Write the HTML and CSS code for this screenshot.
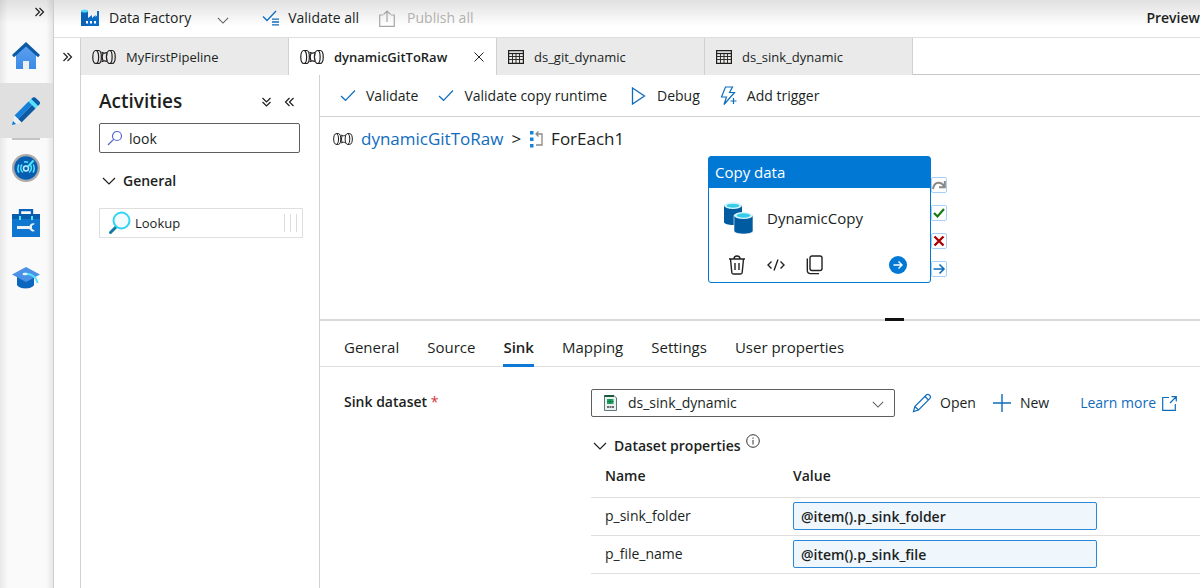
FILE: index.html
```html
<!DOCTYPE html>
<html lang="en">
<head>
<meta charset="utf-8">
<title>Data Factory</title>
<link rel="stylesheet" href="styles.css">
</head>
<body>
<svg class="defs" aria-hidden="true">
  <symbol id="pipeline" viewBox="0 0 24 16">
    <g fill="none" stroke="currentColor" stroke-width="1.2">
      <path d="M4 1.500c-4.300 0-4.300 13 0 13M4 1.500h2.500c3.800 0 3.800 13 0 13H4M4 1.500c3.500 0 3.500 13 0 13"/>
      <path d="M9.500 3.200c2 1.200 4 1.200 6 0M9.500 12.800c2-1.200 4-1.200 6 0M11 3.800c-1 2.500-1 6 0 8.400"/>
      <path d="M20 1.500c4.300 0 4.300 13 0 13M20 1.500h-2.500c-.8 0-1.400.6-1.900 1.600M20 14.500h-2.500c-.8 0-1.400-.6-1.900-1.600M17.500 1.500c3.500 0 3.500 13 0 13M15.300 3.500c-1 2.500-1 6.500 0 9"/>
    </g>
  </symbol>
  <symbol id="table" viewBox="0 0 16 14">
    <path d="M.600.600h14.800v12.800H.6z" fill="none" stroke="currentColor" stroke-width="1.200"/>
    <path d="M1 3.500h14" stroke="currentColor" stroke-width="1.200"/>
    <path d="M1 6.500h14M1 9.500h14M4.500 3.500v10M8 3.500v10M11.500 3.500v10" stroke="currentColor" stroke-width=".9"/>
  </symbol>
  <symbol id="check" viewBox="0 0 16 14"><path d="M1 7l4.500 4.300L15 1.500" fill="none" stroke="currentColor" stroke-width="1.200"/></symbol>
  <symbol id="chev" viewBox="0 0 14 8"><path d="M1 1l6 6 6-6" fill="none" stroke="currentColor" stroke-width="1.200"/></symbol>
  <symbol id="double" viewBox="0 0 10 10"><path d="M1 1l4 4-4 4M5 1l4 4-4 4" fill="none" stroke="currentColor" stroke-width="1.200"/></symbol>
</svg>

<nav class="rail" aria-label="Main">
  <button class="rail-expand" aria-label="Expand navigation"><svg width="11" height="10"><use href="#double"/></svg></button>
  <button class="rail-item" aria-label="Home">
    <svg width="28" height="28" viewBox="0 0 28 28"><defs><linearGradient id="blue" x1="0" y1="0" x2="0" y2="1"><stop offset="0" stop-color="#5ea0ef"/><stop offset="1" stop-color="#3b8be6"/></linearGradient></defs><path d="M4 12L14 3l10 9v15h-7v-8h-6v8H4z" fill="url(#blue)"/><path d="M11 19h6v8h-6z" fill="#eee"/><path d="M0 13L14 0l14 13-2 2.300L14 4.500 2 15.300z" fill="#0c59a4"/></svg>
  </button>
  <button class="rail-item selected" aria-label="Author">
    <svg width="28" height="28" viewBox="0 0 28 28"><path d="M19 2l2-1.400c1-.7 2-.5 2.800.3l3.600 3.600c.8.800.8 2 .2 2.800L26 9z" fill="#0a5ca8"/><path d="M16.500 4.500L19 2l7 7-2.500 2.500z" fill="#50e6ff"/><path d="M2.500 18.500l14-14 3.500 3.500L6 22z" fill="#1480dc"/><path d="M6 22L20 8l3.500 3.500-14 14z" fill="#0c59a4"/><path d="M2.500 18.500L0 28l9.500-2.500z" fill="#eef0f2"/><path d="M1 24l-1 4 4-1z" fill="#0078d4"/></svg>
  </button>
  <hr class="rail-rule">
  <button class="rail-item" aria-label="Monitor">
    <svg width="28" height="28" viewBox="0 0 28 28"><circle cx="14" cy="14" r="14" fill="#aaa"/><circle cx="14" cy="14" r="11.700" fill="#075eb0"/><g fill="none" stroke="#50e6ff" stroke-width="1.500"><circle cx="14" cy="14.500" r="2.500" stroke="#b9f0ff"/><path d="M16 12.500L21.500 6.500" stroke-width="2"/><path d="M11 18.500a5.500 5.500 0 0 1-1-8M16 8.500a6 6 0 0 0-4-.5M18.500 11a5.500 5.500 0 0 1-1.500 7.500M7 10.500a8 8 0 0 0 0 8M21.200 10.500a8 8 0 0 1-.2 8"/></g></svg>
  </button>
  <button class="rail-item" aria-label="Manage">
    <svg width="28" height="28" viewBox="0 0 28 28"><path d="M8 6V1h12v5" fill="none" stroke="#0a62b8" stroke-width="2.400"/><path d="M0 5h28v23H0z" fill="#0f76d0"/><path d="M0 5h28v5H0z" fill="#075cac"/><path d="M7 7h2v4H7zM19 7h2v4h-2z" fill="#50e6ff"/><path d="M5 17h12.500a4 4 0 0 1 5.500-2.300l-3 2v3l3 2.300A4 4 0 0 1 17.500 20H5z" fill="#e9f1f8"/></svg>
  </button>
  <button class="rail-item" aria-label="Learning center">
    <svg width="28" height="24" viewBox="0 0 28 24"><path d="M5 9h17v10c-2 4.500-15 4.500-17 0z" fill="#0b66bd"/><path d="M0 8.500L14 1l14 7.500L14 16z" fill="#4b92e6"/><path d="M12 8c6-1 12 2 13.500 9" fill="none" stroke="#50e6ff" stroke-width="2"/><ellipse cx="13" cy="8" rx="2.500" ry="1.200" fill="#e5f5ff"/></svg>
  </button>
</nav>

<div class="app">
  <header class="topbar">
    <button class="cmd brand"><svg width="18" height="18" viewBox="0 0 18 18"><path d="M0 2h7v15H0z" fill="#0b62b5"/><path d="M7 17V9l4-3v3l3.500-3v2L16 6.500V2h2v15z" fill="#0a6cc6"/><ellipse cx="3.500" cy="2" rx="3.500" ry="1.500" fill="#50d8f5"/><path d="M5 12h2v2.500H5zM9 12h2v2.500H9zM13 12h2v2.500h-2z" fill="#fff"/></svg>Data Factory<svg class="drop" width="12" height="7"><use href="#chev"/></svg></button>
    <button class="cmd"><svg width="18" height="16" viewBox="0 0 18 16"><g fill="none" stroke="#0f6cbd" stroke-width="1.300"><path d="M1 6.500L5 10.500 14 1M10 9.200h7M10 12h7M10 14.800h7"/></g></svg>Validate all</button>
    <button class="cmd" disabled><svg width="16" height="17" viewBox="0 0 16 17"><path d="M4 5H.7v11.300h14.600V5H12M8 12V1M4.500 4.500L8 1l3.500 3.500" fill="none" stroke="#a8a6a4" stroke-width="1.200"/></svg>Publish all</button>
    <span class="preview">Preview</span>
  </header>

  <div class="workspace">
    <div class="tree-toggle"><button aria-label="Expand resources"><svg width="11" height="10"><use href="#double"/></svg></button></div>
    <div class="stage">
      <div class="doc-tabs" role="tablist" aria-label="Open documents">
        <button class="doc-tab" role="tab"><svg width="24" height="16"><use href="#pipeline"/></svg>MyFirstPipeline</button>
        <div class="doc-tab active"><button class="tab-name" role="tab" aria-selected="true"><svg width="24" height="16"><use href="#pipeline"/></svg>dynamicGitToRaw</button><button class="close" aria-label="Close"><svg width="10" height="10" viewBox="0 0 10 10"><path d="M.5.500l9 9M9.500.500l-9 9" stroke="#222"/></svg></button></div>
        <button class="doc-tab" role="tab"><svg width="16" height="14"><use href="#table"/></svg>ds_git_dynamic</button>
        <button class="doc-tab" role="tab"><svg width="16" height="14"><use href="#table"/></svg>ds_sink_dynamic</button>
      </div>

      <div class="panes">
        <aside class="activities">
          <div class="act-head">
            <h2>Activities</h2>
            <button aria-label="Expand all"><svg class="down" width="11" height="10"><use href="#double"/></svg></button>
            <button aria-label="Collapse panel"><svg class="left" width="11" height="10"><use href="#double"/></svg></button>
          </div>
          <label class="search"><svg width="16" height="16" viewBox="0 0 16 16"><g fill="none" stroke="#5167d8" stroke-width="1.200"><circle cx="10" cy="6" r="4.500"/><path d="M6.800 9.200L1 15"/></g></svg><input type="text" value="look" aria-label="Search activities"></label>
          <button class="group"><svg width="14" height="8"><use href="#chev"/></svg>General</button>
          <button class="activity"><svg width="24" height="24" viewBox="0 0 24 24"><path d="M8 16L2.500 21.500" stroke="#0f7ba3" stroke-width="3" stroke-linecap="round"/><circle cx="13.500" cy="9.500" r="8" fill="#f4fbfe" stroke="#32d4f5" stroke-width="2"/></svg>Lookup<span class="grip"></span></button>
        </aside>

        <main class="editor">
          <div class="toolbar">
            <button class="cmd"><svg width="16" height="14"><use href="#check"/></svg>Validate</button>
            <button class="cmd"><svg width="16" height="14"><use href="#check"/></svg>Validate copy runtime</button>
            <button class="cmd"><svg width="20" height="18" viewBox="0 0 20 18"><path d="M5.500 1l12 8-12 8z" fill="none" stroke="currentColor" stroke-width="1.300"/></svg>Debug</button>
            <button class="cmd"><svg width="17" height="20" viewBox="0 0 17 20"><path d="M5.500 1h7l-3 5.500h5L4 18.500l2.500-7.500H1.500zM13.500 12v6M10.500 15h6" fill="none" stroke="currentColor" stroke-width="1.200"/></svg>Add trigger</button>
          </div>

          <section class="canvas" aria-label="Pipeline canvas">
            <div class="crumbs">
              <svg width="20" height="14"><use href="#pipeline"/></svg>
              <a href="#pipeline">dynamicGitToRaw</a>
              <span>&gt;</span>
              <svg width="14" height="17" viewBox="0 0 14 17"><path d="M1 0h3.500v3.500H1zM1 6.500h3.500V10H1zM1 13h3.500v3.500H1z" fill="#1683dc"/><path d="M7 3h6v11H7M9.500.500L7 3l2.500 2.500" fill="none" stroke="#8a8886" stroke-width="1.300"/></svg>
              <span>ForEach1</span>
            </div>
            <article class="node">
              <h3>Copy data</h3>
              <div class="node-name"><svg width="30" height="32" viewBox="0 0 30 32"><path d="M0 3v17c0 4 18 4 18 0V3z" fill="#005ba1"/><ellipse cx="9" cy="3.500" rx="9" ry="3.500" fill="#d9f5fc"/><ellipse cx="9" cy="3.700" rx="6.500" ry="2" fill="#35cde8"/><path d="M10 13v16c0 4 19 4 19 0V13z" fill="#005ba1" stroke="#fff" stroke-width=".6"/><ellipse cx="19.500" cy="13.500" rx="9.500" ry="3.500" fill="#d9f5fc"/><ellipse cx="19.500" cy="13.500" rx="7" ry="2.200" fill="#35cde8"/></svg>DynamicCopy</div>
              <div class="node-actions">
                <button aria-label="Delete"><svg width="18" height="20" viewBox="0 0 18 20"><path d="M1 4h16M6 4c0-4 6-4 6 0M2.500 4l1.300 13.500c.1 1 .7 1.500 1.500 1.500h7.400c.8 0 1.400-.5 1.500-1.500L15.500 4M7 8v7M11 8v7" fill="none" stroke="#222" stroke-width="1.400"/></svg></button>
                <button aria-label="View code"><svg width="18" height="14" viewBox="0 0 18 14"><path d="M4.500 3.500L1 7l3.500 3.500M13.500 3.500L17 7l-3.500 3.500M11 1.500L7 12.500" fill="none" stroke="#222" stroke-width="1.400"/></svg></button>
                <button aria-label="Clone"><svg width="18" height="20" viewBox="0 0 18 20"><rect x="4" y="1" width="12" height="14.500" rx="2" fill="none" stroke="#222" stroke-width="1.400"/><path d="M1.300 3.500v11.800c0 2 1.300 3.300 3.200 3.300H13" fill="none" stroke="#222" stroke-width="1.400"/></svg></button>
                <button class="go" aria-label="Open activity"><svg width="18" height="18" viewBox="0 0 18 18"><circle cx="9" cy="9" r="9" fill="#0078d4"/><path d="M4.500 9h8.500M9.500 5.500L13 9l-3.500 3.500" fill="none" stroke="#fff" stroke-width="1.400"/></svg></button>
              </div>
              <div class="ports">
                <svg width="16" height="16" viewBox="1 1 14 14"><path d="M2 12C3 4.500 10 4 13 9M13.800 4v6.300H8" fill="none" stroke="#8a8886" stroke-width="2"/></svg>
                <svg width="16" height="16" viewBox="1 1 14 14"><path d="M3 8l3.500 3.500L13 4" fill="none" stroke="#107c10" stroke-width="2.200"/></svg>
                <svg width="16" height="16" viewBox="1 1 14 14"><path d="M3.500 3.500l9 9M12.500 3.500l-9 9" stroke="#a80000" stroke-width="2.400"/></svg>
                <svg width="16" height="16" viewBox="1 1 14 14"><path d="M2.500 8h10.500M8.500 3.500L13 8l-4.500 4.500" fill="none" stroke="#0f6cbd" stroke-width="1.600"/></svg>
              </div>
            </article>
            <span class="handle"></span>
          </section>

          <div class="prop-tabs" role="tablist" aria-label="Activity settings">
            <button role="tab">General</button><button role="tab">Source</button><button role="tab" aria-selected="true">Sink</button><button role="tab">Mapping</button><button role="tab">Settings</button><button role="tab">User properties</button>
          </div>

          <section class="form">
            <label class="form-label" for="dataset">Sink dataset <span class="req">*</span></label>
            <div class="fields">
              <div class="field-row">
                <div class="select">
                  <svg class="file" width="13" height="16" viewBox="0 0 13 16"><path d="M.5.500h9.500l2.500 2.500v12.500H.5z" fill="#e9f1f1" stroke="#64747c"/><path d="M.5 1H10" stroke="#185c37" stroke-width="2"/><path d="M3 4h6.500v5H3z" fill="#21a366"/><path d="M3 6.500h6.500M6 4v5" stroke="#107c41"/><path d="M3 12h7" stroke="#444" stroke-width="1.500" stroke-dasharray="2 .5"/></svg>
                  <select id="dataset"><option>ds_sink_dynamic</option></select>
                  <svg class="caret" width="12" height="7"><use href="#chev"/></svg>
                </div>
                <button class="cmd"><svg width="20" height="20" viewBox="0 0 20 20"><path d="M1.500 18.500l1.300-5L14.500 1.800c2-1.600 5 1.400 3.500 3.500L6.500 17zM13 3.500L16.500 7M2.800 13.500L6.500 17" fill="none" stroke="currentColor" stroke-width="1.200"/></svg>Open</button>
                <button class="cmd add"><svg width="18" height="18" viewBox="0 0 18 18"><path d="M9 0v18M0 9h18" stroke="currentColor" stroke-width="1.400"/></svg>New</button>
                <a class="learn" href="#learn">Learn more<svg width="15" height="15" viewBox="0 0 15 15"><path d="M7 1.500H.7v12.800h12.600V8M9.500.700h4.800v4.800M14 1L8 7" fill="none" stroke="currentColor" stroke-width="1.200"/></svg></a>
              </div>
              <button class="group props"><svg width="14" height="8"><use href="#chev"/></svg>Dataset properties<svg class="info" width="14" height="14" viewBox="0 0 14 14"><circle cx="7" cy="7" r="6.300" fill="none" stroke="#333"/><path d="M7 6v4.500M7 3.500v1.300" stroke="#333"/></svg></button>
              <table>
                <thead><tr><th scope="col">Name</th><th scope="col">Value</th></tr></thead>
                <tbody>
                  <tr><td><label for="folder">p_sink_folder</label></td><td><input id="folder" type="text" value="@item().p_sink_folder"></td></tr>
                  <tr><td><label for="file">p_file_name</label></td><td><input id="file" type="text" value="@item().p_sink_file"></td></tr>
                </tbody>
              </table>
            </div>
          </section>
        </main>
      </div>
    </div>
  </div>
</div>
</body>
</html>
```
FILE: styles.css
```css
* { box-sizing: border-box; }
body {
  margin: 0;
  min-height: 100vh;
  display: flex;
  overflow-x: hidden;
  background: #fff;
  color: #201f1e;
  font: 14px/20px "Open Sans", "Noto Sans", sans-serif;
}
button, input, select { font: inherit; color: inherit; }
button { border: 0; padding: 0; background: none; text-align: left; }
svg { display: block; flex: none; }
.defs { position: absolute; width: 0; height: 0; }
a { color: #0f6cbd; text-decoration: none; }

/* Left rail */
.rail {
  flex: none;
  width: 54px;
  display: flex;
  flex-direction: column;
  border-right: 1px solid #cfcfcf;
  background:
    linear-gradient(#0000001a, transparent 24px),
    linear-gradient(to right, #00000012, transparent 8px, transparent 46px, #00000014),
    #fafafa;
}
.rail-expand { height: 28px; padding: 0 8px 4px 34px; }
.rail-item { height: 55px; display: grid; place-items: center; padding-right: 1px; }
.rail-item.selected { background: #e0e0e0; }
.rail-rule { width: 28px; height: 2px; margin: 0 12px; border: 0; background: #c4c4c4; }

/* Top bar */
.app { flex: 1; min-width: 0; display: flex; flex-direction: column; }
.topbar {
  height: 38px;
  display: flex;
  align-items: center;
  padding: 0 0 1px 27px;
  gap: 20px;
  border-bottom: 1px solid #e1dfdd;
  background: linear-gradient(#0000001f, transparent 26px);
}
.cmd { display: flex; align-items: center; gap: 8px; white-space: nowrap; }
.cmd:disabled { color: #b3b0ad; }
.topbar .brand { gap: 10px; margin-right: 13px; }
.drop { margin: 4px 0 0 16px; color: #605e5c; }
.topbar .cmd:disabled { gap: 12px; }
.preview { margin-left: auto; font-weight: 600; }

.workspace { flex: 1; display: flex; }
.tree-toggle { flex: none; width: 27px; padding: 9px 8px; border-right: 1px solid #d2d0ce; }
.tree-toggle button { display: grid; align-items: center; height: 20px; }
.stage { flex: 1; min-width: 0; display: flex; flex-direction: column; }

/* Document tabs */
.doc-tabs { display: flex; height: 37px; border-bottom: 1px solid #c8c6c4; }
.doc-tab {
  width: 208px;
  height: 37px;
  display: flex;
  align-items: center;
  gap: 10px;
  padding-left: 11px;
  background: #eaeaea;
  border-right: 1px solid #d2d0ce;
}
.doc-tab, .tab-name { font-size: 13px; }
.doc-tab.active { background: #fff; font-weight: 600; }
.tab-name { display: flex; align-items: center; gap: 10px; font-weight: 600; }
.close { margin: 0 12px 0 auto; }

.panes { flex: 1; display: flex; }

/* Activities panel */
.activities { flex: none; width: 239px; padding: 13px 16px 0 18px; border-right: 1px solid #d2d0ce; }
.act-head { display: flex; align-items: center; gap: 12px; padding-right: 8px; }
.act-head h2 { flex: 1; margin: 0; font-size: 19px; line-height: 27px; font-weight: 600; }
.down { transform: rotate(90deg); }
.left { transform: rotate(180deg); }
.search {
  display: flex;
  align-items: center;
  gap: 6px;
  height: 30px;
  margin: 8px 3px 0 0;
  padding: 0 7px;
  border: 1px solid #605e5c;
  border-radius: 2px;
}
.search input { flex: 1; min-width: 0; padding: 2px 0 0; border: 0; outline: 0; background: none; }
.group { display: flex; align-items: center; gap: 7px; font-weight: 600; }
.activities .group { margin: 18px 3px 17px; }
.activity {
  width: 100%;
  height: 30px;
  display: flex;
  align-items: center;
  gap: 3px;
  padding: 0 4px 0 8px;
  border: 1px solid #e1dfdd;
  font-size: 13px;
}
.grip {
  width: 14px;
  height: 18px;
  margin-left: auto;
  background: repeating-linear-gradient(to right, #dcdcdc 0 1px, transparent 1px 6px);
}

/* Editor */
.editor { flex: 1; min-width: 0; display: flex; flex-direction: column; }
.toolbar { display: flex; align-items: center; gap: 20px; height: 42px; padding: 1px 0 0 20px; border-bottom: 1px solid #d2d0ce; }
.toolbar .cmd { gap: 10px; }
.cmd svg:not(.drop) { color: #0f6cbd; }

.canvas { position: relative; height: 204px; border-bottom: 2px solid #dad9d8; }
.crumbs { display: flex; align-items: center; gap: 8px; padding: 10px 13px; font-size: 17px; line-height: 24px; }
.node {
  position: absolute;
  left: 388px;
  top: 39px;
  width: 223px;
  border: 1px solid #0078d4;
  border-radius: 3px;
}
.node h3 { margin: 0; padding: 4px 6px; background: #0078d4; color: #fff; font-size: 15px; line-height: 23px; font-weight: 400; }
.node-name { display: flex; align-items: center; gap: 13px; height: 60px; padding-left: 15px; font-size: 15px; }
.node-actions { display: flex; align-items: center; gap: 21px; height: 34px; padding: 0 23px 0 19px; }
.go { margin-left: auto; }
.ports { position: absolute; left: 222px; top: 20px; display: grid; gap: 12px; }
.ports svg { border: 1px solid #a6d0f5; border-radius: 2px; background: #fff; }
.handle { position: absolute; left: 565px; bottom: -2px; width: 19px; height: 3px; background: #111; }

.prop-tabs { display: flex; gap: 28px; height: 46px; padding-left: 24px; border-bottom: 1px solid #e1dfdd; font-size: 15px; }
.prop-tabs button { height: 46px; padding-top: 8px; border-bottom: 3px solid transparent; white-space: nowrap; }
.prop-tabs [aria-selected="true"] { font-weight: 600; border-color: #0f78d4; }

.form { display: flex; padding: 22px 0 0 24px; }
.form-label { flex: none; width: 247px; padding-top: 3px; font-weight: 600; }
.req { color: #d13438; font-weight: 400; }
.fields { flex: 1; min-width: 0; }
.field-row { display: flex; align-items: center; gap: 17px; }
.add { gap: 9px; }
.select { position: relative; flex: none; width: 304px; }
.select select {
  display: block;
  width: 100%;
  height: 28px;
  padding: 0 32px 0 36px;
  appearance: none;
  border: 1px solid #605e5c;
  border-radius: 2px;
  background: #fff;
}
.file { position: absolute; left: 13px; top: 6px; }
.caret { position: absolute; right: 11px; top: 12px; color: #605e5c; }
.learn { display: flex; align-items: center; gap: 6px; margin-left: 14px; white-space: nowrap; }
.props { margin: 19px 0 0 2px; }
.info { align-self: flex-start; margin: -2px 0 0 -2px; }
table { width: 100%; border-collapse: collapse; table-layout: fixed; }
th, td { padding: 0; text-align: left; border-bottom: 1px solid #e1dfdd; }
th { height: 41px; font-weight: 600; }
td { height: 38px; }
th:first-child, td:first-child { width: 202px; padding-left: 14px; }
td input {
  display: block;
  width: 304px;
  height: 28px;
  padding: 0 7px;
  border: 1px solid #2b88d8;
  border-radius: 2px;
  background: #eff6fc;
  font-weight: 600;
}
```
